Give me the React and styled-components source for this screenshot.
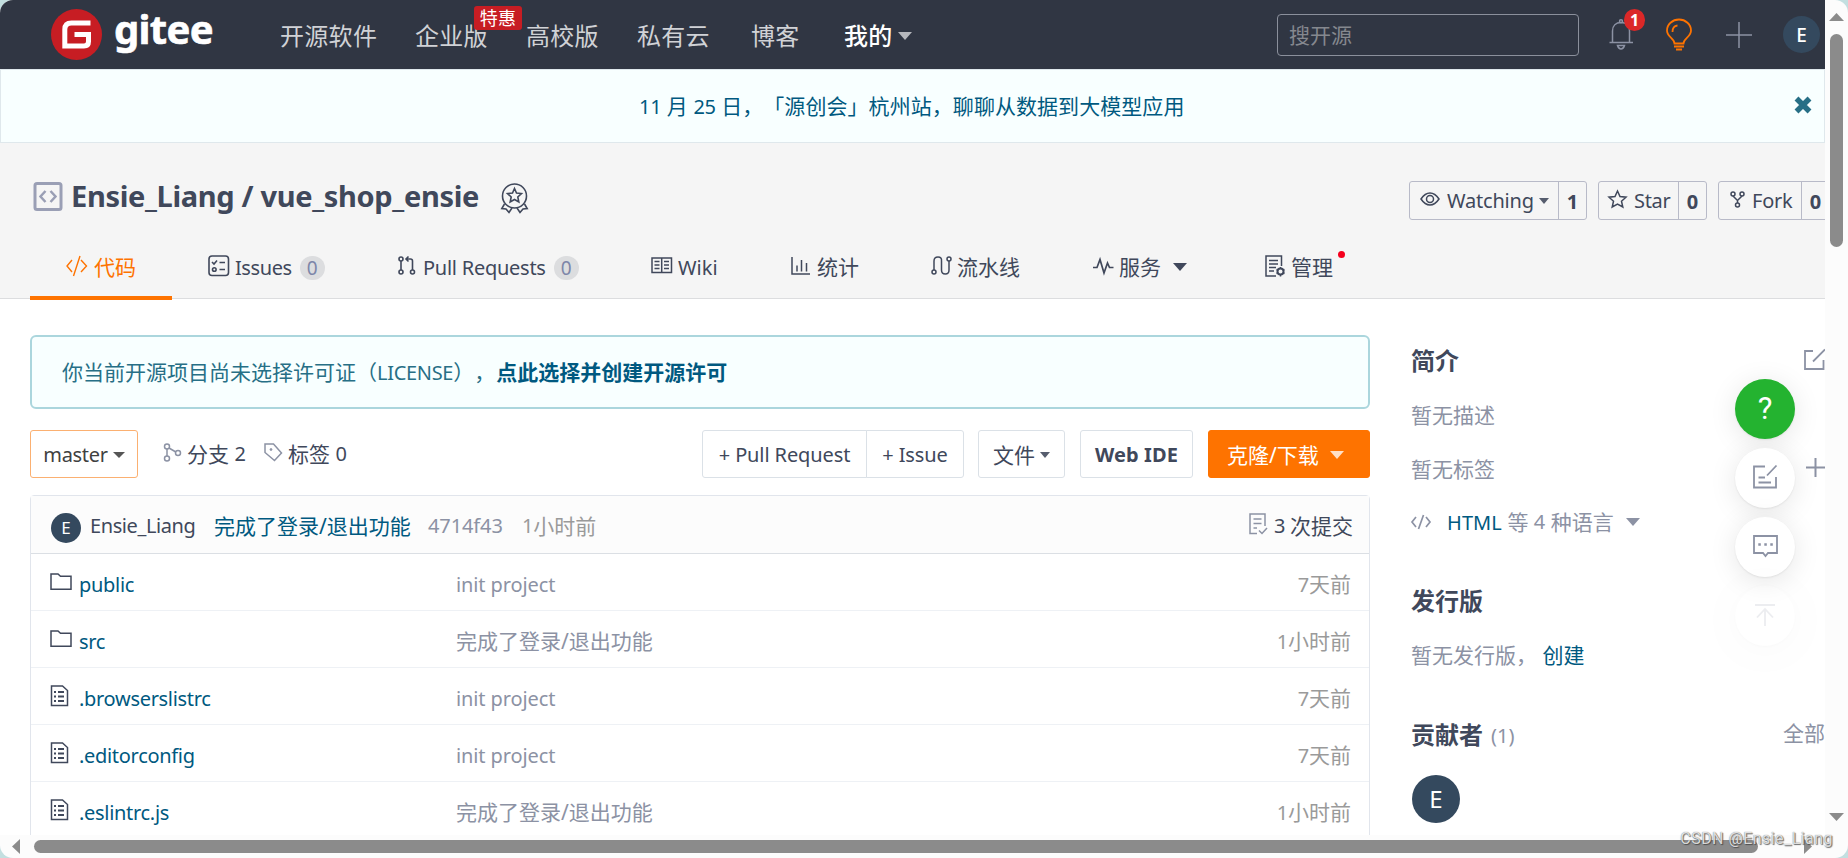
import React from "react";
import styled, {createGlobalStyle} from "styled-components";

const link = '#005980';
const text = '#40485b';
const muted = '#8c92a4';
const orange = '#fe7300';

const GlobalStyle = createGlobalStyle`
    * {
        box-sizing: border-box;
    }

    body {
        margin: 0;
        background: #c3dfe0;
        color: ${text};
        font-family: "Noto Sans", "Noto Sans CJK SC", sans-serif;
        font-size: 21px;
        line-height: 30px;
        text-spacing-trim: space-all;
        overflow: hidden;
    }
`;

const Window = styled.div`
    display: grid;
    grid-template-columns: 1825px 23px;
    grid-template-rows: 835px 23px;
    width: 1848px;
    height: 858px;
    background: #fcfcfc;
    border-radius: 13px;
    overflow: hidden;
    position: relative;
`;

const Page = styled.div`
    background: #fff;
    overflow: hidden;
`;

// Latin runs are drawn a little smaller than the Chinese around them
const En = styled.span`
    font-size: 0.952em;
    letter-spacing: ${p => p.$ls ?? -0.3}px;
`;

const Caret = styled.span`
    width: 0;
    height: 0;
    flex: none;
    border-left: ${p => p.$w ?? 6}px solid transparent;
    border-right: ${p => p.$w ?? 6}px solid transparent;
    border-top: ${p => p.$h ?? 6}px solid ${p => p.$color ?? '#565d6e'};
    margin-left: ${p => p.$ml ?? 5}px;
`;

const Svg = styled.svg`
    display: block;
    flex: none;
    overflow: visible;
`;

const Icon = ({w, h, color = 'currentColor', stroke = 1.5, children}) => (
    <Svg width={w} height={h} viewBox={`0 0 ${w} ${h}`} fill="none" stroke={color} strokeWidth={stroke}>
        {children}
    </Svg>
);

/* ---------- top bar ---------- */

const TopBar = styled.header`
    display: flex;
    height: 69px;
    padding-left: 51px;
    background: #303643;
    color: #d0d2d6;
    align-items: center;
`;

const Logo = styled.div`
    display: flex;
    align-items: center;
    width: 229px;
    height: 69px;
`;

const LogoName = styled.span`
    margin-left: 12px;
    margin-top: -11px;
    color: #fff;
    font: 700 40px/50px "Noto Sans", sans-serif;
    letter-spacing: -0.7px;
    -webkit-text-stroke: 0.6px #fff;
`;

const NavItem = styled.a`
    position: relative;
    display: flex;
    align-items: center;
    width: ${p => p.$width}px;
    font-size: 24px;
    line-height: 34px;
    letter-spacing: 0.3px;
    padding-top: 3px;
    color: ${p => p.$active ? '#fff' : 'inherit'};
    font-weight: ${p => p.$active ? 500 : 400};
`;

const Promo = styled.span`
    position: absolute;
    left: 59px;
    top: -10px;
    width: 48px;
    height: 24px;
    border-radius: 3px;
    background: #c71d23;
    color: #fff;
    font-size: 18px;
    line-height: 24px;
    text-align: center;
`;

const Search = styled.div`
    width: 302px;
    height: 42px;
    border: 1px solid #8b909c;
    border-radius: 4px;
    padding-left: 11px;
    margin-right: 29px;
    margin-top: 1px;
    color: #85888f;
    line-height: 41px;
`;

const TopIcon = styled.div`
    position: relative;
    width: ${p => p.$width}px;
    display: flex;
    color: #8c92a4;
`;

const Unread = styled.span`
    position: absolute;
    left: 16px;
    top: -10px;
    width: 21px;
    height: 22px;
    border-radius: 11px;
    background: #db2828;
    color: #fff;
    font-size: 16px;
    font-weight: 700;
    line-height: 22px;
    text-align: center;
`;

const Avatar = styled.span`
    display: flex;
    align-items: center;
    justify-content: center;
    flex: none;
    width: ${p => p.$size}px;
    height: ${p => p.$size}px;
    border-radius: 50%;
    background: #34495e;
    color: #fff;
    font-size: ${p => p.$font}px;
    font-weight: ${p => p.$weight ?? 400};
`;

/* ---------- notice ---------- */

const Notice = styled.div`
    display: flex;
    align-items: center;
    height: 74px;
    border: 1px solid #dfe8ec;
    background: #f8ffff;
    color: ${link};
    padding: 1px 13px 0 638px;

    svg {
        margin-top: -4px;
    }
`;

const NoticeText = styled.span`
    width: 1156px;
    letter-spacing: 0.06px;
`;

/* ---------- repository header ---------- */

const RepoHeader = styled.section`
    height: 156px;
    background: #f5f5f5;
    border-bottom: 1px solid #dcdddf;
`;

const TitleRow = styled.div`
    display: flex;
    height: 97px;
    padding-left: 33px;
    padding-top: 36px;
`;

const RepoTitle = styled.h1`
    flex: none;
    margin: -1px 23px 0 9px;
    width: 407px;
    font-size: 29px;
    line-height: 36px;
    font-weight: 700;
    white-space: nowrap;
    letter-spacing: -0.33px;
`;

const RepoActions = styled.div`
    display: flex;
    flex: none;
    margin-left: 881px;
    padding-top: 2px;
`;

const ActionButton = styled.div`
    display: flex;
    flex: none;
    width: ${p => p.$width}px;
    height: 39px;
    border: 1px solid #b8bac8;
    border-radius: 3px;
    margin-right: 11px;
`;

const ActionLabel = styled.span`
    display: flex;
    align-items: center;
    width: ${p => p.$width}px;
    padding-left: ${p => p.$pad ?? 10}px;
    padding-top: 1px;
    border-right: 1px solid #b8bac8;

    svg {
        margin-right: 7px;
        margin-top: -4px;
    }
`;

const ActionCount = styled.b`
    flex: 1;
    padding-top: 5px;
    text-align: center;
    font-size: 20px;
`;

const Tabs = styled.nav`
    display: flex;
    height: 60px;
    padding-left: 30px;
`;

const Tab = styled.a`
    display: flex;
    align-items: center;
    flex: none;
    height: 60px;
    width: ${p => p.$width}px;
    padding-left: 36px;
    padding-bottom: ${p => p.$active ? 2 : 6}px;
    color: ${p => p.$active ? orange : text};
    border-bottom: ${p => p.$active ? `4px solid ${orange}` : 0};

    ${En} {
        padding-top: 1px;
    }
`;

const TabIcon = styled.span`
    width: ${p => p.$width}px;
    margin-top: -3px;
`;

const Count = styled.span`
    width: 25px;
    height: 24px;
    border-radius: 12px;
    margin-left: 8px;
    margin-top: 2px;
    background: #dcdddf;
    color: #7d86a9;
    font-size: 19px;
    line-height: 25px;
    text-align: center;
`;

const RedDot = styled.span`
    width: 7px;
    height: 7px;
    border-radius: 50%;
    background: #f5001d;
    margin: -25px 0 0 5px;
`;

/* ---------- main ---------- */

const Columns = styled.div`
    display: flex;
    padding: 36px 0 0 30px;
`;

const Main = styled.main`
    width: 1340px;
    flex: none;
`;

const License = styled.div`
    height: 74px;
    border: 2px solid #abd6dd;
    border-radius: 6px;
    background: #f8ffff;
    color: #276f86;
    padding: 20px 30px;

    b {
        color: ${link};
        margin-left: 1px;
    }
`;

const Toolbar = styled.div`
    display: flex;
    align-items: center;
    margin-top: 21px;
    height: 48px;
`;

const Button = styled.span`
    display: flex;
    align-items: center;
    justify-content: center;
    flex: none;
    width: ${p => p.$width}px;
    height: 48px;
    margin-left: ${p => p.$ml ?? 0}px;
    padding-top: 1px;
    border: 1px solid ${p => p.$border ?? '#dbe1e7'};
    border-radius: 3px;
    background: ${p => p.$bg ?? '#fff'};
    color: ${p => p.$color ?? text};
    font-weight: ${p => p.$bold ? 700 : 400};
    white-space: pre;
`;

const CloneButton = styled(Button)`
    justify-content: flex-start;
    padding-left: 18px;
`;

const ButtonGroup = styled.span`
    display: flex;
    margin-left: auto;
    flex: none;

    ${Button}:first-child {
        border-radius: 3px 0 0 3px;
    }

    ${Button}:last-child {
        border-radius: 0 3px 3px 0;
        margin-left: -1px;
    }
`;

const Refs = styled.span`
    display: flex;
    margin-left: 25px;
`;

const RefInfo = styled.span`
    display: flex;
    align-items: center;
    flex: none;
    width: 101px;
    white-space: pre;

    svg {
        margin-right: 6px;
        margin-top: -4px;
    }
`;

const Table = styled.div`
    margin-top: 17px;
    border: 1px solid #e1e5ec;
    border-radius: 4px 4px 0 0;
`;

const CommitRow = styled.div`
    display: flex;
    align-items: center;
    height: 58px;
    padding: 3px 16px 0 20px;
    background: #fcfcfc;
    border-bottom: 1px solid #dbdfe4;

    ${Avatar} {
        margin-top: 4px;
    }
`;

const Cell = styled.span`
    display: flex;
    align-items: center;
    width: ${p => p.$width}px;
    color: ${p => p.$color ?? text};
    white-space: pre;
`;

const Commits = styled.span`
    display: flex;
    align-items: center;
    margin-left: auto;
    white-space: pre;

    svg {
        margin-right: 7px;
        margin-top: -5px;
    }
`;

const FileRow = styled.div`
    display: grid;
    grid-template-columns: 29px 377px 1fr auto;
    align-items: center;
    height: 57px;
    padding: 4px 18px 0 19px;
    border-bottom: 1px solid #eef1f5;

    svg {
        margin-top: -5px;
    }
`;

const FileName = styled.a`
    color: ${link};
`;

const FileMessage = styled.span`
    color: ${muted};
`;

const FileTime = styled.span`
    color: #9a9a9a;
`;

/* ---------- sidebar ---------- */

const Side = styled.aside`
    width: 414px;
    margin-left: 41px;
    color: ${muted};
`;

const SideRow = styled.div`
    display: flex;
    align-items: center;
    height: ${p => p.$height}px;
    padding-top: ${p => p.$pad ?? 0}px;
    white-space: pre;
`;

const SideTitle = styled.h3`
    margin: 0;
    font-size: 24px;
    line-height: 34px;
    color: ${text};
`;

const Total = styled.span`
    margin-left: 8px;
    font-size: 20px;
    padding-top: 2px;
`;

const Right = styled.span`
    margin: -4px 0 0 auto;
`;

const Link = styled.a`
    color: ${link};
    margin-left: ${p => p.$ml}px;
`;

const Contributors = styled.div`
    margin: 10px 0 0 1px;
`;

// Round buttons that float over the sidebar
const Floating = styled.div`
    position: absolute;
    left: 1735px;
    top: 379px;
    display: flex;
    flex-direction: column;
    gap: 9px;
`;

const Round = styled.span`
    display: flex;
    align-items: center;
    justify-content: center;
    width: 60px;
    height: 60px;
    border-radius: 50%;
    background: ${p => p.$green ? '#24b330' : '#fff'};
    color: ${p => p.$green ? '#fff' : muted};
    opacity: ${p => p.$faded ? 0.16 : 1};
    box-shadow: 0 1px 2px rgba(0, 0, 0, 0.07), 0 4px 28px rgba(0, 0, 0, 0.1);
    font: 400 31px/60px Roboto, sans-serif;

    svg {
        margin-top: -2px;
    }
`;

/* ---------- scrollbars ---------- */

const VBar = styled.div`
    display: flex;
    flex-direction: column;
    align-items: center;
    padding: 13px 0 14px;
`;

const HBar = styled.div`
    grid-column: 1 / 3;
    display: flex;
    align-items: center;
    padding: 0 36px 0 12px;
`;

const VThumb = styled.span`
    width: 13px;
    height: 213px;
    border-radius: 7px;
    background: #8b8b8b;
    margin: 13px 0 auto;
`;

const HThumb = styled.span`
    width: 1724px;
    height: 13px;
    border-radius: 7px;
    background: #8b8b8b;
    margin: 0 auto 0 14px;
`;

const Watermark = styled.span`
    position: absolute;
    right: 15px;
    bottom: 7px;
    color: rgba(255, 255, 255, 0.8);
    font: 16px/24px Roboto, sans-serif;
    letter-spacing: 0.45px;
    text-shadow: 1px 1px 1px rgba(60, 60, 60, 0.75), 0 0 1px rgba(80, 80, 80, 0.9);
`;

const Arrow = ({w, h, points}) => (
    <Svg width={w} height={h} viewBox={`0 0 ${w} ${h}`}>
        <polygon points={points} fill="#8b8b8b"/>
    </Svg>
);

const FolderIcon = () => (
    <Icon w={22} h={17}>
        <path d="M1 1H8L10.5 3.3H21V16.2H1Z"/>
    </Icon>
);

const FileIcon = () => (
    <Icon w={18} h={22}>
        <path d="M1.500 1H12.5L17.500 5.5V20.5H1.500Z"/>
        <path d="M4 7H6M8 7H14M4 11.5H6M8 11.5H14M4 16H6M8 16H14" strokeWidth={1.8}/>
    </Icon>
);

const EditIcon = () => (
    <Icon w={21} h={21} color={muted} stroke={1.8}>
        <path d="M9 2H1V20H19.5V11M21 0.5L9 12.5"/>
    </Icon>
);

const files = [
    {name: 'public', folder: true, message: 'init project', time: ['7', '天前']},
    {name: 'src', folder: true, message: '完成了登录/退出功能', time: ['1', '小时前']},
    {name: '.browserslistrc', message: 'init project', time: ['7', '天前']},
    {name: '.editorconfig', message: 'init project', time: ['7', '天前']},
    {name: '.eslintrc.js', message: '完成了登录/退出功能', time: ['1', '小时前']}
];

const Header = () => (
    <TopBar>
        <Logo>
            <Icon w={51} h={51} stroke={0}>
                <circle cx="25.5" cy="25.5" r="25.5" fill="#c71d23"/>
                <path d="M39.5 14H20.5Q13.8 14 13.8 20.5V37H33Q37.5 37 37.5 32.5V25.5H23.5"
                      stroke="#fff" strokeWidth="5"/>
            </Icon>
            <LogoName>gitee</LogoName>
        </Logo>
        <NavItem $width={135}>开源软件</NavItem>
        <NavItem $width={111}>企业版<Promo>特惠</Promo></NavItem>
        <NavItem $width={111}>高校版</NavItem>
        <NavItem $width={114}>私有云</NavItem>
        <NavItem $width={93}>博客</NavItem>
        <NavItem $width={433} $active>我的<Caret $w={7} $h={8} $color="#b6b8bd"/></NavItem>
        <Search>搜开源</Search>
        <TopIcon $width={58}>
            <Icon w={26} h={31}>
                <path d="M1.5 23.5H25M4.5 23V12C4.5 6.5 8 3.5 13 3.5S21.500 6.500 21.500 12V23"/>
                <circle cx="13" cy="2.2" r="1.5"/>
                <path d="M9.500 26.500H16.500Q15.500 30 13 30T9.500 26.500Z"/>
            </Icon>
            <Unread>1</Unread>
        </TopIcon>
        <TopIcon $width={60}>
            <Icon w={26} h={32} color={orange} stroke={1.8}>
                <path d="M8.500 24.500C8.500 19.500 1 18 1 11.500A12 11 0 0 1 25 11.500C25 18 17.500 19.500 17.500 24.500Z"/>
                <path d="M6.500 13Q6.500 7 11.500 6.500M8 27.500H18M10 30.500H16"/>
            </Icon>
        </TopIcon>
        <TopIcon $width={57}>
            <Icon w={26} h={26}>
                <path d="M13 0V26M0 13H26"/>
            </Icon>
        </TopIcon>
        <Avatar $size={37} $font={19} $weight={500}>E</Avatar>
    </TopBar>
);

const Actions = () => (
    <RepoActions>
        <ActionButton $width={178}>
            <ActionLabel $width={149}>
                <Icon w={20} h={14}>
                    <path d="M1 7Q5 1 10 1T19 7Q15 13 10 13T1 7Z"/>
                    <circle cx="10" cy="7" r="3.5"/>
                </Icon>
                <En $ls={-0.2}>Watching</En>
                <Caret $w={5.5}/>
            </ActionLabel>
            <ActionCount>1</ActionCount>
        </ActionButton>
        <ActionButton $width={109}>
            <ActionLabel $width={80} $pad={9}>
                <Icon w={19} h={18}>
                    <path d="M9.500 1L12 6.600L18 7.200L13.500 11.200L14.800 17L9.500 14L4.200 17L5.500 11.200L1 7.200L7 6.600Z"/>
                </Icon>
                <En>Star</En>
            </ActionLabel>
            <ActionCount>0</ActionCount>
        </ActionButton>
        <ActionButton $width={112}>
            <ActionLabel $width={83} $pad={11}>
                <Icon w={15} h={17}>
                    <circle cx="3" cy="3" r="2"/>
                    <circle cx="12" cy="3" r="2"/>
                    <circle cx="7.500" cy="14" r="2"/>
                    <path d="M3 5L7.500 9.500L12 5M7.500 9.500V12"/>
                </Icon>
                <En $ls={-0.2}>Fork</En>
            </ActionLabel>
            <ActionCount>0</ActionCount>
        </ActionButton>
    </RepoActions>
);

const RepoTabs = () => (
    <Tabs>
        <Tab $width={142} $active>
            <TabIcon $width={28}>
                <Icon w={21} h={20} stroke={1.4}>
                    <path d="M6 4L1 10L6 16M15 4L20.500 10L15 16M14 0L7.500 20"/>
                </Icon>
            </TabIcon>
            代码
        </Tab>
        <Tab $width={190}>
            <TabIcon $width={27}>
                <Icon w={21} h={21} stroke={1.6}>
                    <rect x="1" y="1" width="19.500" height="19.500" rx="3"/>
                    <path d="M4 7L6 9L9 5.500M11.500 7.500H17M11.500 14.500H17"/>
                    <circle cx="6.300" cy="14.500" r="1.800"/>
                </Icon>
            </TabIcon>
            <En $ls={-0.4}>Issues</En>
            <Count>0</Count>
        </Tab>
        <Tab $width={253}>
            <TabIcon $width={25}>
                <Icon w={17} h={20} stroke={1.6}>
                    <circle cx="3" cy="3" r="2"/>
                    <circle cx="3" cy="16" r="2"/>
                    <circle cx="14.500" cy="16" r="2"/>
                    <path d="M3 5V14M14.500 14V5Q14.500 3 12.500 3H8M10.500 0.500L8 3L10.500 5.500"/>
                </Icon>
            </TabIcon>
            <En $ls={-0.25}>Pull Requests</En>
            <Count>0</Count>
        </Tab>
        <Tab $width={140}>
            <TabIcon $width={27}>
                <Icon w={21} h={17} stroke={1.5}>
                    <path d="M1 1H20.500V15.500H1ZM10.700 1V15.500M3.500 4.500H8.500M3.500 8H8.500M3.500 11.500H8.500M13 4.500H18M13 8H18M13 11.500H18"/>
                </Icon>
            </TabIcon>
            <En $ls={0}>Wiki</En>
        </Tab>
        <Tab $width={140}>
            <TabIcon $width={26}>
                <Icon w={19} h={18}>
                    <path d="M1 0V17H19M6 8.500V14.500M10.500 3V14.500M15.500 6V14.500"/>
                </Icon>
            </TabIcon>
            统计
        </Tab>
        <Tab $width={162}>
            <TabIcon $width={26}>
                <Icon w={21} h={19}>
                    <circle cx="3" cy="16" r="2"/>
                    <circle cx="18" cy="3" r="2"/>
                    <path d="M3 14V5Q3 1 7 1T10.500 5V14Q10.500 18 14.300 18T18 14V5"/>
                </Icon>
            </TabIcon>
            流水线
        </Tab>
        <Tab $width={172}>
            <TabIcon $width={26}>
                <Icon w={20} h={16} stroke={1.7}>
                    <path d="M0 9.500H4L7 1.500L11 15L14.500 5L16.500 9.500H20.500"/>
                </Icon>
            </TabIcon>
            服务
            <Caret $w={7} $h={8} $ml={12} $color={text}/>
        </Tab>
        <Tab $width={130}>
            <TabIcon $width={26}>
                <Icon w={20} h={22}>
                    <path d="M11 21H1V1H16.500V11M4 5.500H13M4 9H13M4 12.500H11M4 16H9"/>
                    <circle cx="15.500" cy="16.500" r="3" strokeWidth="2"/>
                    <path d="M15.500 12V13M15.500 20V21.500M11.500 14.500L12.500 15M18.500 18L19.500 18.500M11.500 18.500L12.500 18M18.500 15L19.500 14.500"/>
                </Icon>
            </TabIcon>
            管理
            <RedDot/>
        </Tab>
    </Tabs>
);

const RepoToolbar = () => (
    <Toolbar>
        <Button $width={108} $border="#fbb071" $color="#40413f">
            <En>master</En><Caret $w={6} $color="#565656"/>
        </Button>
        <Refs>
            <RefInfo>
                <Icon w={18} h={19} color={muted}>
                    <circle cx="4" cy="3.500" r="2.500"/>
                    <circle cx="4" cy="15.500" r="2.500"/>
                    <circle cx="15" cy="10" r="2.500"/>
                    <path d="M4 6V13M6 5L12.800 9"/>
                </Icon>
                分支 <En>2</En>
            </RefInfo>
            <RefInfo>
                <Icon w={18} h={18} color={muted}>
                    <path d="M1 1H9.500L17.500 10L10.500 17.500L1 9.500Z"/>
                    <circle cx="7" cy="6.500" r="1" fill={muted} strokeWidth="0.8"/>
                </Icon>
                标签 <En>0</En>
            </RefInfo>
        </Refs>
        <ButtonGroup>
            <Button $width={165}><En $ls={-0.1}>+ Pull Request</En></Button>
            <Button $width={98}><En $ls={-0.1}>+ Issue</En></Button>
        </ButtonGroup>
        <Button $width={87} $ml={14}>文件<Caret $w={5.5}/></Button>
        <Button $width={113} $ml={15} $bold><En $ls={0.1}>Web IDE</En></Button>
        <CloneButton $width={162} $ml={15} $bg={orange} $border={orange} $color="#fff">
            克隆/下载<Caret $w={7} $h={8} $ml={11} $color="#ffe0c7"/>
        </CloneButton>
    </Toolbar>
);

const FileTable = () => (
    <Table>
        <CommitRow>
            <Cell $width={39}><Avatar $size={30} $font={17}>E</Avatar></Cell>
            <Cell $width={124}><En $ls={-0.4}>Ensie_Liang</En></Cell>
            <Cell $width={214} $color={link}>完成了登录/退出功能</Cell>
            <Cell $width={94} $color={muted}><En $ls={-0.1}>4714f43</En></Cell>
            <Cell $width={90} $color="#9a9a9a"><En>1</En>小时前</Cell>
            <Commits>
                <Icon w={18} h={22} color={muted}>
                    <path d="M8 20.500H1V1H16V13M4.500 6H12.500M4.500 10.500H12.500M4.500 15H8M10 17.500L13 20.500L18 15"/>
                </Icon>
                <En>3 </En>次提交
            </Commits>
        </CommitRow>
        {files.map(({name, folder, message, time}) => (
            <FileRow key={name}>
                {folder ? <FolderIcon/> : <FileIcon/>}
                <FileName><En>{name}</En></FileName>
                <FileMessage>{message === 'init project' ? <En $ls={-0.1}>{message}</En> : message}</FileMessage>
                <FileTime><En>{time[0]}</En>{time[1]}</FileTime>
            </FileRow>
        ))}
    </Table>
);

const Sidebar = () => (
    <Side>
        <SideRow $height={52}>
            <SideTitle>简介</SideTitle>
            <Right><EditIcon/></Right>
        </SideRow>
        <SideRow $height={56}>暂无描述</SideRow>
        <SideRow $height={52}>
            暂无标签
            <Right>
                <Icon w={19} h={19} color={muted} stroke={2}>
                    <path d="M9.500 0V19M0 9.500H19"/>
                </Icon>
            </Right>
        </SideRow>
        <SideRow $height={54}>
            <Icon w={20} h={14} stroke={1.7}>
                <path d="M5 2L1 7L5 12M15 2L19 7L15 12M12.500 0L7.500 14"/>
            </Icon>
            <Link $ml={16}><En $ls={0.1}>HTML</En></Link> 等 <En $ls={0}>4</En> 种语言
            <Caret $w={7} $h={8} $ml={12} $color={muted}/>
        </SideRow>
        <SideRow $height={84} $pad={20}>
            <SideTitle>发行版</SideTitle>
        </SideRow>
        <SideRow $height={44}>暂无发行版， <Link $ml={0}>创建</Link></SideRow>
        <SideRow $height={88} $pad={28}>
            <SideTitle>贡献者</SideTitle>
            <Total>(1)</Total>
            <Right>全部</Right>
        </SideRow>
        <Contributors>
            <Avatar $size={48} $font={24}>E</Avatar>
        </Contributors>
    </Side>
);

const FloatingButtons = () => (
    <Floating>
        <Round $green>?</Round>
        <Round>
            <Icon w={24} h={24} stroke={1.8}>
                <path d="M12 1.500H1V22.500H23V12M23.500 0.500L14 10.500M5.500 12.500H12M5.500 17.500H18"/>
            </Icon>
        </Round>
        <Round>
            <Icon w={25} h={22} stroke={1.8}>
                <path d="M1 1H24V18H15L12.500 21L10 18H1Z"/>
                <path d="M5.300 9.500H7.800M11.300 9.500H13.800M17.300 9.500H19.800" strokeWidth="2.500"/>
            </Icon>
        </Round>
        <Round $faded>
            <Icon w={20} h={22} stroke={1.8}>
                <path d="M0 1H20M10 22V5M2 13.500L10 5L18 13.500"/>
            </Icon>
        </Round>
    </Floating>
);

export default function App() {
    return (
        <Window>
            <GlobalStyle/>
            <Page>
                <Header/>
                <Notice>
                    <NoticeText>
                        <En>11</En> 月 <En>25</En> 日，「源创会」杭州站，聊聊从数据到大模型应用
                    </NoticeText>
                    <Icon w={16} h={16} color="#276f86" stroke={5.5}>
                        <path d="M1.500 1.500L14.500 14.500M14.500 1.500L1.500 14.500"/>
                    </Icon>
                </Notice>
                <RepoHeader>
                    <TitleRow>
                        <Icon w={29} h={34} color="#9a9fb5" stroke={3}>
                            <rect x="2" y="4.500" width="26" height="26" rx="2"/>
                            <path d="M12.500 12L7.500 17.500L12.500 23M17.500 12L22.500 17.500L17.500 23" strokeWidth="2.500"/>
                        </Icon>
                        <RepoTitle>Ensie_Liang / vue_shop_ensie</RepoTitle>
                        <Icon w={27} h={34} stroke={1.6}>
                            <circle cx="13.500" cy="17" r="12"/>
                            <path d="M13.500 9.500L15.500 14L20.500 14.500L16.800 18L17.800 23L13.500 20.500L9.200 23L10.200 18L6.500 14.500L11.500 14Z"/>
                            <path d="M3.500 25L0.800 29.500L5 30L8 33.500L11 29M23.500 25L26.200 29.500L22 30L19 33.500L16 29"/>
                        </Icon>
                        <Actions/>
                    </TitleRow>
                    <RepoTabs/>
                </RepoHeader>
                <Columns>
                    <Main>
                        <License>
                            你当前开源项目尚未选择许可证（<En>LICENSE</En>），<b>点此选择并创建开源许可</b>
                        </License>
                        <RepoToolbar/>
                        <FileTable/>
                    </Main>
                    <Sidebar/>
                </Columns>
            </Page>
            <VBar>
                <Arrow w={15} h={8} points="7.5,0 15,8 0,8"/>
                <VThumb/>
                <Arrow w={15} h={8} points="0,0 15,0 7.5,8"/>
            </VBar>
            <HBar>
                <Arrow w={8} h={15} points="8,0 8,15 0,7.5"/>
                <HThumb/>
                <Arrow w={8} h={15} points="0,0 8,7.5 0,15"/>
            </HBar>
            <FloatingButtons/>
            <Watermark>CSDN @Ensie_Liang</Watermark>
        </Window>
    );
}
